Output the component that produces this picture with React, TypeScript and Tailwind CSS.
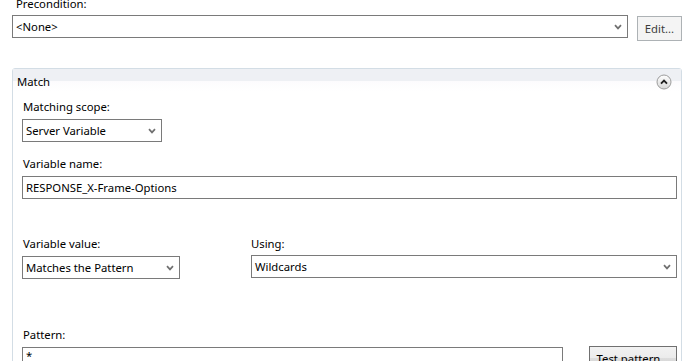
import clsx from 'clsx'

function Chevron() {
  return (
    <svg width="8" height="6" viewBox="0 0 8 6" className="shrink-0">
      <path d="M1 1.2 L4 4.4 L7 1.2" stroke="#707070" strokeWidth="1.7" fill="none" />
    </svg>
  )
}

function Select({ value, className }: { value: string; className?: string }) {
  return (
    <div
      className={clsx(
        'flex h-[23px] items-center justify-between border border-[#7a7a7a] bg-white pl-[3px] pr-[5px]',
        className
      )}
    >
      <span className="whitespace-nowrap">{value}</span>
      <Chevron />
    </div>
  )
}

function TextBox({ value, className }: { value: string; className?: string }) {
  return (
    <div className={clsx('flex h-[23px] items-center border border-[#7a7a7a] bg-white pl-[3px]', className)}>
      <span className="whitespace-nowrap">{value}</span>
    </div>
  )
}

function Label({ children, className }: { children: string; className?: string }) {
  return <div className={clsx('h-[16px] whitespace-nowrap pl-[1px]', className)}>{children}</div>
}

function CollapseButton() {
  return (
    <svg width="16" height="16" viewBox="0 0 16 16">
      <defs>
        <linearGradient id="collapse-fill" x1="0" y1="0" x2="0" y2="1">
          <stop offset="0" stopColor="#ffffff" />
          <stop offset="1" stopColor="#d6d6d6" />
        </linearGradient>
      </defs>
      <circle cx="8" cy="8" r="7" fill="url(#collapse-fill)" stroke="#9c9c9c" />
      <path d="M5 9.6 L8 6.6 L11 9.6" stroke="#1f1f1f" strokeWidth="1.9" fill="none" />
    </svg>
  )
}

export default function App() {
  return (
    <div className="h-[361px] w-[686px] overflow-hidden bg-white pl-[12px] font-['Noto_Sans',sans-serif] text-[11.3px] leading-[16px] text-black">
      <Label className="-mt-[4px] pl-[4px]">Precondition:</Label>
      <div className="mt-[3px] flex items-start gap-[9px]">
        <Select value="<None>" className="w-[616px]" />
        <button className="mt-[1px] h-[25px] w-[45px] border border-[#adb2b5] bg-[#f4f4f4] text-[#3c3c3c]">
          Edit...
        </button>
      </div>

      <div className="mt-[27px] h-[320px] w-[670px] rounded-t-[3px] border border-[#d3dde5]">
        <div className="flex h-[26px] items-center justify-between bg-[linear-gradient(#eef0f4_0,#eef0f4_12px,#fcfbfd_12px,#ffffff_22px)] pl-[4px] pr-[9px]">
          <span>Match</span>
          <CollapseButton />
        </div>

        <div className="pl-[9px] pr-[4px]">
          <Label className="mt-[4px]">Matching scope:</Label>
          <Select value="Server Variable" className="mt-[4px] w-[140px]" />

          <Label className="mt-[14px]">Variable name:</Label>
          <TextBox value="RESPONSE_X-Frame-Options" className="mt-[4px]" />

          <div className="mt-[37px] flex gap-[71px]">
            <div className="w-[158px]">
              <Label>Variable value:</Label>
              <Select value="Matches the Pattern" className="mt-[4px]" />
            </div>
            <div className="flex-1">
              <Label className="-ml-[1px]">Using:</Label>
              <Select value="Wildcards" className="mt-[3px]" />
            </div>
          </div>

          <Label className="mt-[48px]">Pattern:</Label>
          <div className="mt-[4px] flex items-start gap-[26px]">
            <TextBox value="*" className="w-[541px] items-start" />
            <button className="-mt-[1px] h-[24px] flex-1 border border-[#707070] bg-[linear-gradient(#f2f2f2_0,#ebebeb_50%,#dddddd_50%,#cfcfcf)] pt-[1px]">
              Test pattern...
            </button>
          </div>
        </div>
      </div>
    </div>
  )
}
